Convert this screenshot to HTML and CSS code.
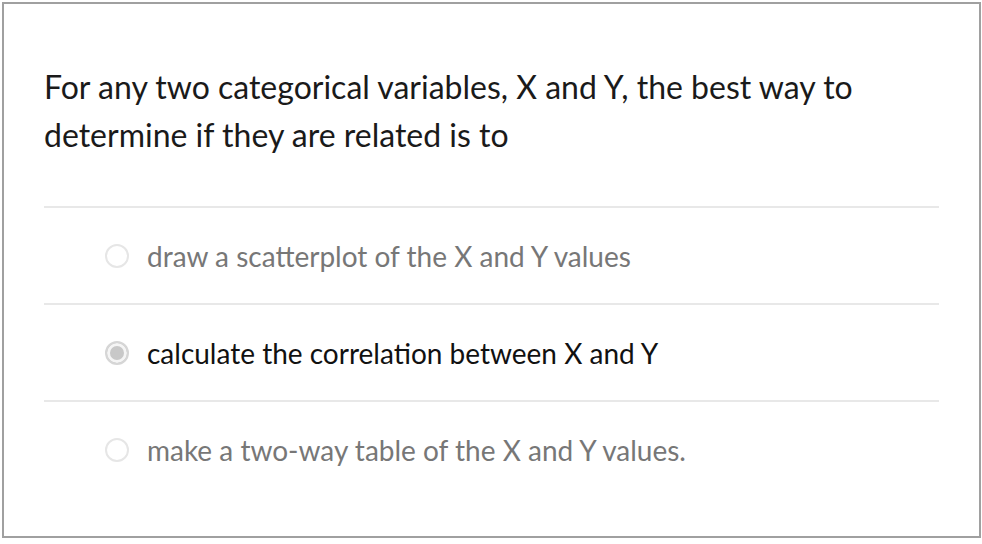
FILE: index.html
```html
<!DOCTYPE html>
<html>
<head>
<meta charset="utf-8">
<link rel="stylesheet" href="styles.css">
</head>
<body>
<div class="card">
  <div class="question">For any two categorical variables, X and Y, the best way to determine if they are related is to</div>
  <div class="options">
    <div class="option">
      <span class="radio"></span>
      <span class="label">draw a scatterplot of the X and Y values</span>
    </div>
    <div class="option selected">
      <span class="radio"></span>
      <span class="label">calculate the correlation between X and Y</span>
    </div>
    <div class="option">
      <span class="radio"></span>
      <span class="label">make a two-way table of the X and Y values.</span>
    </div>
  </div>
</div>
</body>
</html>
```
FILE: styles.css
```css
html, body {
  margin: 0;
  padding: 0;
  background: #ffffff;
}
body {
  font-family: Lato, "Open Sans", sans-serif;
  padding: 2px 1px 0 2px;
}
.card {
  box-sizing: border-box;
  width: 979px;
  height: 536px;
  border: 2px solid #a0a0a0;
  padding: 0 40px 0 40px;
}
.question {
  padding-top: 59px;
  padding-bottom: 47px;
  font-size: 32px;
  line-height: 48px;
  color: #1a1a1a;
  width: 850px;
}
.options {
  border-top: 2px solid #e8e8e8;
}
.option {
  display: flex;
  align-items: center;
  height: 95px;
  padding-left: 61px;
  border-bottom: 2px solid #e8e8e8;
}
.option:last-child {
  border-bottom: none;
}
.radio {
  box-sizing: border-box;
  width: 24px;
  height: 24px;
  border-radius: 50%;
  border: 2px solid #e6e6e6;
  background: #fff;
  margin-right: 18px;
  flex: none;
}
.selected .radio {
  border: 2px solid #d6d6d6;
  background: #c8c8c8;
  box-shadow: inset 0 0 0 3px #f5f5f5;
}
.label {
  font-size: 28px;
  color: #777777;
}
.selected .label {
  color: #111111;
}
```
